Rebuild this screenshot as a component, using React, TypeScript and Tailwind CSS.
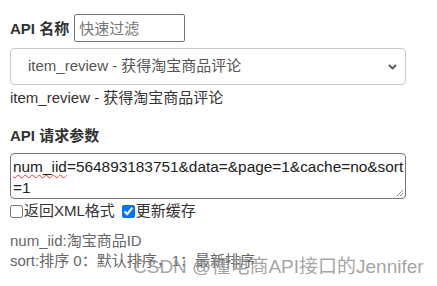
export default function App() {
  return (
    <div
      className="relative w-[437px] h-[286px] overflow-hidden bg-white px-[10px] text-[#333] text-[15px]"
      style={{ fontFamily: '"Liberation Sans", "Noto Sans CJK SC", sans-serif' }}
    >
      <div className="mt-[14px] flex h-[28px] items-center">
        <span className="font-bold leading-[21px]">API 名称</span>
        <input
          className="ml-[5px] h-[28px] w-[111px] rounded-[2px] border border-[#767676] px-[4px] text-[15px] placeholder:text-[#757575] outline-none"
          placeholder="快速过滤"
        />
      </div>

      <div className="relative mt-[6px] flex h-[37px] w-[396px] items-center rounded-[4px] border border-[#cccccc] pl-[17px] text-[#555]">
        <span>item_review - 获得淘宝商品评论</span>
        <svg className="absolute right-[8px] top-[15px]" width="9" height="6" viewBox="0 0 9 6">
          <path d="M1 1 L4.5 4.5 L8 1" fill="none" stroke="#555" strokeWidth="1.8" />
        </svg>
      </div>

      <div className="mt-[2px] leading-[21px]">item_review - 获得淘宝商品评论</div>

      <div className="mt-[17px] font-bold leading-[21px]">API 请求参数</div>

      <div className="relative mt-[7px] h-[46px] w-[396px] rounded-[4px] border border-[#767676] px-[2px] pt-[2px] text-[15.4px] leading-[21px] text-[#222]">
        <div className="whitespace-nowrap">
          <span className="underline decoration-wavy decoration-[#e53935] decoration-1 underline-offset-2">num_iid</span>
          =564893183751&amp;data=&amp;page=1&amp;cache=no&amp;sort
        </div>
        <div>=1</div>
        <svg className="absolute bottom-[1px] right-[1px]" width="8" height="8" viewBox="0 0 8 8">
          <path d="M7 1 L1 7 M7 4 L4 7" stroke="#888" strokeWidth="1" />
        </svg>
      </div>

      <div className="mt-[2px] flex h-[21px] items-center">
        <input type="checkbox" className="h-[13px] w-[13px]" />
        <span className="ml-[1px]">返回XML格式</span>
        <input type="checkbox" defaultChecked className="ml-[7px] h-[13px] w-[13px]" />
        <span className="ml-[1px]">更新缓存</span>
      </div>

      <div className="mt-[9px] leading-[20px] text-[#666]">num_iid:淘宝商品ID</div>
      <div className="leading-[20px] text-[#666]">sort:排序 0：默认排序，1：最新排序</div>

      <div className="absolute left-[133px] top-[255px] whitespace-nowrap text-[19px] leading-[24px] text-[rgba(140,140,140,0.8)]">
        CSDN @懂电商API接口的Jennifer
      </div>
    </div>
  )
}
